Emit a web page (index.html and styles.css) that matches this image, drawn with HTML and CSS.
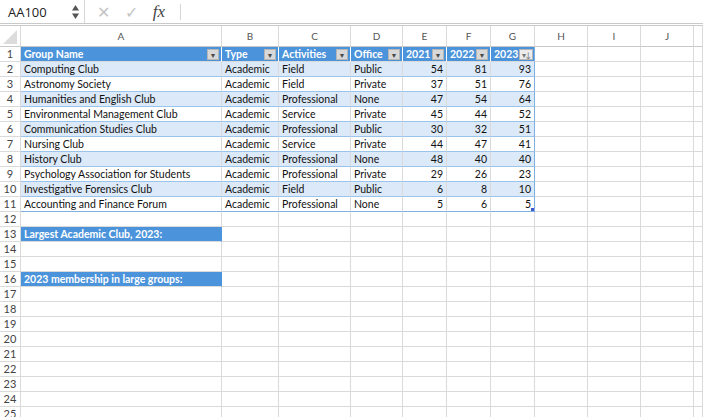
FILE: index.html
```html
<!DOCTYPE html>
<html>

<head>
  <title>Clubs - Sheet1</title>
  <meta charset="utf-8" />
  <link rel="stylesheet" href="styles.css">
</head>

<body>
  <div id="formula-bar">
    <div class="name-box">AA100</div>
    <div class="spinner">
      <svg width="9" height="16" viewBox="0 0 9 16">
        <polygon points="4.5,1 8,6.5 1,6.5" fill="#555"/>
        <polygon points="1,9.5 8,9.5 4.5,15" fill="#555"/>
      </svg>
    </div>
    <div class="bar-divider"></div>
    <div class="bar-icons">
      <span class="bar-icon cancel">&#10005;</span>
      <span class="bar-icon enter">&#10003;</span>
      <span class="bar-icon fx">fx</span>
    </div>
    <div class="bar-divider short"></div>
  </div>

  <div id="sheet">
    <div class="row col-heads">
      <div class="cell corner"><svg width="20" height="21" viewBox="0 0 20 21"><polygon points="17,4 17,18 3,18" fill="#dcdcdc"/></svg></div>
      <div class="cell head">A</div>
      <div class="cell head">B</div>
      <div class="cell head">C</div>
      <div class="cell head">D</div>
      <div class="cell head">E</div>
      <div class="cell head">F</div>
      <div class="cell head">G</div>
      <div class="cell head">H</div>
      <div class="cell head">I</div>
      <div class="cell head">J</div>
      <div class="cell head"></div>
    </div>
  </div>

  <script>
    // table data
    var rows = [
      ["Computing Club", "Academic", "Field", "Public", 54, 81, 93],
      ["Astronomy Society", "Academic", "Field", "Private", 37, 51, 76],
      ["Humanities and English Club", "Academic", "Professional", "None", 47, 54, 64],
      ["Environmental Management Club", "Academic", "Service", "Private", 45, 44, 52],
      ["Communication Studies Club", "Academic", "Professional", "Public", 30, 32, 51],
      ["Nursing Club", "Academic", "Service", "Private", 44, 47, 41],
      ["History Club", "Academic", "Professional", "None", 48, 40, 40],
      ["Psychology Association for Students", "Academic", "Professional", "Private", 29, 26, 23],
      ["Investigative Forensics Club", "Academic", "Field", "Public", 6, 8, 10],
      ["Accounting and Finance Forum", "Academic", "Professional", "None", 5, 6, 5]
    ];
    var headers = ["Group Name", "Type", "Activities", "Office", "2021", "2022", "2023"];
    var labels = { 13: "Largest Academic Club, 2023:", 16: "2023 membership in large groups:" };
    var sheet = document.getElementById("sheet");

    function addRow(num, cells, cls) {
      var row = document.createElement("div");
      row.className = "row " + (cls || "");
      var html = "<div class='cell num'>" + num + "</div>";
      for (var i = 0; i < 11; i++) {
        var c = cells[i];
        if (c === undefined || c === null) c = "";
        var kind = typeof c === "number" ? " right" : "";
        if (i < 7 && cls) kind += " tbl";
        if (i == 6 && cls) kind += " last";
        html += "<div class='cell" + kind + "'>" + c + "</div>";
      }
      row.innerHTML = html;
      sheet.appendChild(row);
      return row;
    }

    // header row with filter buttons
    var head = addRow(1, [], "tbl-head");
    var hc = head.querySelectorAll(".cell");
    for (var i = 0; i < headers.length; i++) {
      var btn = i == 6 ? "<span class='filter sort'>&#9662;&#8595;</span>" : "<span class='filter'>&#9660;</span>";
      hc[i + 1].innerHTML = "<span class='label'>" + headers[i] + "</span>" + btn;
      hc[i + 1].className += i >= 4 ? " th right-th" : " th";
    }

    for (var r = 0; r < rows.length; r++) {
      var row = addRow(r + 2, rows[r], r % 2 == 0 ? "band" : "plain");
      if (r == rows.length - 1) {
        row.className += " tbl-end";
        row.querySelectorAll(".cell")[7].innerHTML += "<span class='handle'></span>";
      }
    }

    for (var n = 12; n <= 25; n++) {
      var row = addRow(n, labels[n] ? [labels[n]] : []);
      if (labels[n]) row.querySelectorAll(".cell")[1].className += " label-cell";
    }
  </script>
</body>

</html>
```

FILE: styles.css
```css
html,
body {
  margin: 0;
  padding: 0;
  background-color: #ffffff;
  overflow: hidden;
}

body {
  font-family: "Lato", "Liberation Sans", sans-serif;
  font-size: 10.5px;
  color: #111111;
}

#formula-bar {
  display: flex;
  align-items: center;
  height: 23px;
  border-bottom: 3px double #c9c9c9;
}

.name-box {
  width: 63px;
  padding-left: 8px;
  font-family: "Open Sans", sans-serif;
  font-size: 13px;
  color: #222222;
}

.spinner {
  width: 13px;
  height: 16px;
}

.spinner svg {
  display: block;
}

.bar-divider {
  width: 1px;
  height: 23px;
  background: #d6d6d6;
}

.bar-divider.short {
  height: 16px;
}

.bar-icons {
  display: flex;
  align-items: center;
  width: 91px;
  padding-left: 4px;
}

.bar-icon {
  color: #c4c4c4;
  font-size: 16px;
  width: 28px;
  text-align: center;
}

.bar-icon.fx {
  color: #444444;
  font-family: "Liberation Serif", serif;
  font-style: italic;
  font-size: 17px;
}

#sheet {
  display: flex;
  flex-direction: column;
}

.row {
  display: grid;
  grid-template-columns: 21px 201px 57px 72px 52px 44px 44px 44px 53px 53px 53px 1fr;
  height: 15px;
}

.cell {
  box-sizing: border-box;
  height: 15px;
  border-right: 1px solid #dadada;
  border-bottom: 1px solid #dadada;
  padding: 0 3px;
  line-height: 14px;
  white-space: nowrap;
  overflow: hidden;
  position: relative;
}

.right {
  text-align: right;
}

.col-heads {
  height: 21px;
}

.col-heads .cell {
  height: 21px;
  line-height: 20px;
  text-align: center;
  color: #555555;
  font-size: 10px;
  border-bottom-color: #c8c8c8;
  padding: 0;
}

.corner {
  background: #ffffff;
}

.corner svg {
  display: block;
}

.num {
  text-align: center;
  color: #444444;
  font-size: 11px;
  padding: 0;
}

.tbl-head .th {
  background: #4b93da;
  color: #ffffff;
  font-weight: bold;
  border-right: 1px solid #ffffff;
  padding-right: 16px;
}

.tbl-head .right-th {
  text-align: right;
}

.filter {
  position: absolute;
  right: 2px;
  top: 2px;
  width: 12px;
  height: 11px;
  background: #d8d8d8;
  border: 1px solid #b5b5b5;
  box-sizing: border-box;
  color: #4a4a4a;
  font-size: 7px;
  line-height: 10px;
  text-align: center;
  font-weight: normal;
}

.filter.sort {
  width: 14px;
  right: 1px;
  background: #ececec;
  font-size: 8px;
  letter-spacing: -1px;
  color: #777777;
}

.band .tbl {
  background: #dce9f8;
}

.band .tbl,
.plain .tbl {
  border-bottom-color: #9cc3ea;
}

.tbl.last {
  border-right: 1px solid #7fb0e4;
}

.tbl-end .tbl {
  border-bottom: 1px solid #7fb0e4;
}

.handle {
  position: absolute;
  right: -1px;
  bottom: -1px;
  width: 4px;
  height: 4px;
  background: #3d56c9;
}

.label-cell {
  background: #4b93da;
  color: #ffffff;
  font-weight: bold;
  border-right-color: #4b93da;
}
```
